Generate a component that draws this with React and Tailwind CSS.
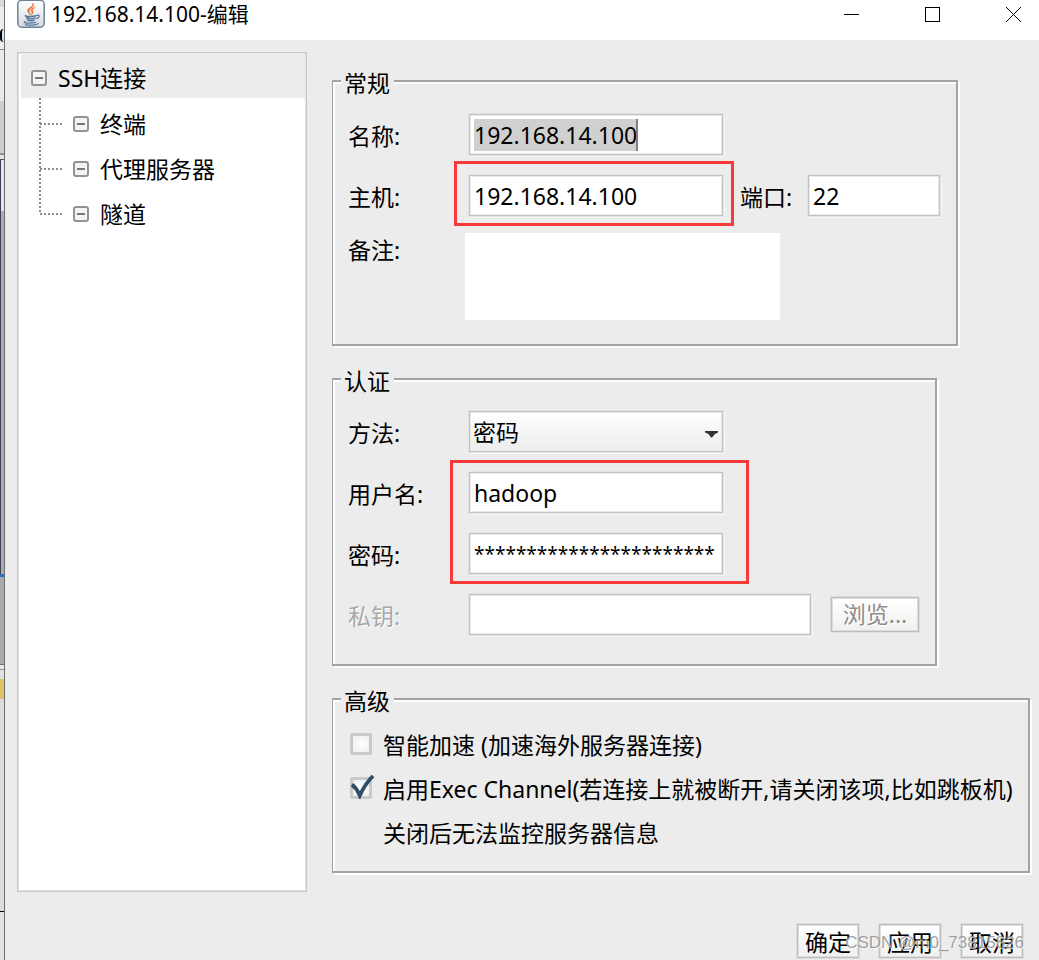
import { useEffect, useRef } from "react";

const fieldEdge =
  "border border-[#c3c3c3] outline-none shadow-[0_0_0_1px_#e4e4e4,inset_0_0_0_1px_#e9e9e9,2px_2px_0_#f6f6f6]";

const inputClass = "h-[41px] bg-white px-1 text-black " + fieldEdge;

const edgeBands = [
  "h-[7px] bg-[#dadada]",
  "h-[22px] bg-[#ededed]",
  "h-[13px] bg-[#cfe3f2] border-l-2 border-black rounded-l-full",
  "h-[7px] bg-[#ededed]",
  "h-px bg-[#8a8a8a]",
  "h-[51px] bg-[#e9e9e9]",
  "h-[52px] bg-[#cdd0d3]",
  "h-[2px] bg-[#8c8c8c]",
  "h-[4px] bg-[#e6e6e6]",
  "h-px bg-[#555555]",
  "h-[51px] bg-[#e6e4e4] border-l border-[#3a4254]",
  "h-[363px] bg-[#adadad] border-l border-[#3a4254]",
  "h-[3px] bg-[#2f6fc0]",
  "h-[87px] bg-[#a9a9ab]",
  "h-px bg-[#707070]",
  "h-[4px] bg-[#e8e8e8]",
  "h-px bg-[#909090]",
  "h-[9px] bg-[#dfe0e1]",
  "h-[20px] bg-[#dfc267]",
  "h-[212px] bg-[#dcdddf]",
  "h-px bg-black",
  "flex-1 bg-[#e2e2e2]",
];

function BackgroundEdge() {
  return (
    <div aria-hidden="true" className="flex w-[5px] shrink-0 flex-col border-r border-[#6c6c6c] bg-[#e2e2e2]">
      {edgeBands.map((c, i) => (
        <div key={i} className={c} />
      ))}
    </div>
  );
}

function JavaIcon() {
  return (
    <svg width="28" height="28" viewBox="0 0 28 28" aria-hidden="true" className="shrink-0">
      <defs>
        <linearGradient id="jbg" x1="0" y1="0" x2="0" y2="1">
          <stop offset="0" stopColor="#ffffff" />
          <stop offset="1" stopColor="#d5dade" />
        </linearGradient>
      </defs>
      <rect x="0.8" y="0.3" width="26.4" height="26.9" rx="4" fill="url(#jbg)" stroke="#6d8194" strokeWidth="1.5" />
      <path
        d="M15.800 3.200C17 7 10.400 7.600 10.600 10.800C10.700 12.600 12.600 13.300 13.400 15C13 12.800 11.900 12 12.300 10.500C13 8.300 17.900 7.300 15.800 3.200z"
        fill="#e8793a"
        stroke="#e8793a"
        strokeWidth="0.8"
      />
      <path
        d="M18.300 7.300C15.500 8 13.600 9.600 14.300 11.200C14.800 12.300 15.500 13.300 14.300 15C16.300 13.800 16.500 12.500 15.900 11.300C15.200 10 16 8.800 18.300 7.300z"
        fill="#e8793a"
        stroke="#e8793a"
        strokeWidth="0.5"
      />
      <g fill="none" stroke="#53789a" strokeLinecap="round">
        <path d="M8.500 15.500c-1.500 1.300 8 1.300 11 .1M9.500 17.800c2.500.9 6.500.9 8.700.1M10.300 20c2 .8 5 .8 7 0" strokeWidth="1.500" />
        <path d="M20 15.300c3-.8 3 2.300-.5 3.400" strokeWidth="1.200" />
        <path d="M8.300 21.500c-4.500 1.500 5 2.300 10.300.9M8.500 24.600c4.500.9 11 .6 12.800-1" strokeWidth="1.200" />
      </g>
    </svg>
  );
}

function WindowButton({ label, children }) {
  return (
    <button type="button" aria-label={label} className="flex h-[29px] w-[51px] items-center justify-center">
      <svg width="17" height="17" viewBox="0 0 17 17" fill="none" stroke="#000" strokeWidth="1" aria-hidden="true">
        {children}
      </svg>
    </button>
  );
}

function TitleBar() {
  return (
    <header className="flex h-10 items-start bg-white pl-3">
      <JavaIcon />
      <h1 className="ml-1.5 text-[21px] leading-[29px]">192.168.14.100-编辑</h1>
      <div className="ml-auto flex gap-[30px]">
        <WindowButton label="最小化">
          <path d="M1 8.5h15" />
        </WindowButton>
        <WindowButton label="最大化">
          <rect x="1.500" y="1.500" width="14" height="14" />
        </WindowButton>
        <WindowButton label="关闭">
          <path d="M1 1l15 15M16 1L1 16" />
        </WindowButton>
      </div>
    </header>
  );
}

function Toggle() {
  return (
    <span aria-hidden="true" className="flex size-4 shrink-0 items-center justify-center rounded-[3px] border-2 border-[#939393] bg-[#f4f4f4]">
      <span className="h-[2px] w-2 bg-[#777777]" />
    </span>
  );
}

function Tree() {
  return (
    <nav className="w-[290px] shrink-0 border border-[#c6c6c6] bg-white pl-[3px] shadow-[inset_0_0_0_1px_#e2e2e2]">
      <a href="#ssh" className="mr-px flex h-[45px] items-center gap-[11px] bg-[#ececec] pt-1 pl-[10px]">
        <Toggle />
        <span>SSH连接</span>
      </a>
      <div className="relative pt-[3px]">
        <span
          aria-hidden="true"
          className="absolute left-[18px] top-0 h-[115px] w-[2px] bg-[repeating-linear-gradient(to_bottom,#8c8c8c_0_2px,transparent_2px_4px)]"
        />
        <ul>
          {["终端", "代理服务器", "隧道"].map((t) => (
            <li key={t}>
              <a href={"#" + t} className="flex h-[45px] items-center pl-[19px]">
                <span
                  aria-hidden="true"
                  className="h-[2px] w-[22px] bg-[repeating-linear-gradient(to_right,#8c8c8c_0_2px,transparent_2px_4px)]"
                />
                <span className="mx-[11px]">
                  <Toggle />
                </span>
                <span>{t}</span>
              </a>
            </li>
          ))}
        </ul>
      </div>
    </nav>
  );
}

function Group({ title, className, children }) {
  return (
    <fieldset
      className={
        "min-w-0 border-2 border-l border-[#a3a3a3] pl-[15px] shadow-[2px_2px_0_#fff,inset_2px_2px_0_#fff] " + className
      }
    >
      <legend className="-ml-[7px] bg-[#ececec] pt-1.5 pr-1 pb-px pl-[3px] leading-6">{title}</legend>
      {children}
    </fieldset>
  );
}

function Label({ htmlFor, children, className = "" }) {
  return (
    <label htmlFor={htmlFor} className={"w-[121px] shrink-0 pt-0.5 leading-7 " + className}>
      {children}
    </label>
  );
}

function Check({ id, defaultChecked, children }) {
  return (
    <div className="flex h-11 items-center pl-0.5">
      <span className="relative mr-[11px] flex size-[22px] shrink-0">
        <input
          id={id}
          type="checkbox"
          defaultChecked={defaultChecked}
          className="peer size-[22px] appearance-none rounded-[2px] border-[3px] border-[#cacaca] bg-[radial-gradient(#ffffff,#ededed)]"
        />
        <svg
          viewBox="0 0 26 24"
          aria-hidden="true"
          className="pointer-events-none absolute -top-0.5 left-0 hidden h-6 w-[26px] peer-checked:block"
        >
          <path d="M2 9.500C5 12 8 16 9.800 20.500C13 13.500 17 7 23 1" fill="none" stroke="#2f4d66" strokeWidth="3.800" />
        </svg>
      </span>
      <label htmlFor={id} className="whitespace-nowrap pt-0.5">
        {children}
      </label>
    </div>
  );
}

const buttonClass =
  "border border-[#bdbdbd] bg-linear-to-b from-white to-[#f0f0f0] leading-none whitespace-nowrap shadow-[0_0_0_1px_#dedede,inset_0_0_0_1px_#dedede]";

export default function App() {
  const nameRef = useRef(null);
  useEffect(() => {
    nameRef.current.focus();
    nameRef.current.select();
  }, []);

  return (
    <div className="flex min-h-screen bg-[#ececec] font-['Noto_Sans','Noto_Sans_CJK_SC',sans-serif] text-[23px] leading-[30px] font-normal text-black">
      <BackgroundEdge />
      <div className="flex min-w-0 flex-1 flex-col">
        <TitleBar />
        <form className="flex flex-1 flex-col" onSubmit={(e) => e.preventDefault()}>
          <div className="flex flex-1 gap-[25px] pt-3 pl-3 pr-[9px]">
            <Tree />
            <div className="flex min-w-0 flex-1 flex-col gap-[17px] pt-[13px]">
              <Group title="常规" className="w-fit pr-4 pb-6">
                <div className="flex flex-col gap-5 pt-[18px]">
                  <div className="flex items-center">
                    <Label htmlFor="name">名称:</Label>
                    <div className="relative flex">
                      <input
                        id="name"
                        ref={nameRef}
                        defaultValue="192.168.14.100"
                        className={inputClass + " w-[254px] selection:bg-[#d0d0d0] selection:text-black"}
                      />
                      <span aria-hidden="true" className="absolute top-[5px] left-[167px] h-8 w-[2px] bg-[#808080]" />
                    </div>
                  </div>
                  <div className="flex items-center">
                    <Label htmlFor="host">主机:</Label>
                    <div className="relative flex">
                      <input id="host" defaultValue="192.168.14.100" className={inputClass + " w-[254px]"} />
                      <span
                        aria-hidden="true"
                        className="pointer-events-none absolute -top-[14px] -right-[11px] -bottom-[10px] -left-[15px] border-[3px] border-[#f93a3a]"
                      />
                    </div>
                    <label htmlFor="port" className="ml-[17px] w-[68px] pt-0.5 leading-7">
                      端口:
                    </label>
                    <input id="port" defaultValue="22" className={inputClass + " w-[132px]"} />
                  </div>
                </div>
                <div className="flex items-start pt-[17px]">
                  <label htmlFor="note" className="w-[117px] shrink-0 pt-[3px] leading-7">
                    备注:
                  </label>
                  <textarea id="note" className="block h-[87px] w-[315px] resize-none bg-white p-1 outline-none" />
                </div>
              </Group>

              <Group title="认证" className="w-fit pr-4 pb-[29px]">
                <div className="flex flex-col gap-5 pt-[17px]">
                  <div className="flex items-center">
                    <Label htmlFor="method">方法:</Label>
                    <div className="relative flex">
                      <select
                        id="method"
                        className={"h-[41px] w-[254px] appearance-none bg-linear-to-b from-white to-[#ededed] px-[3px] " + fieldEdge}
                      >
                        <option>密码</option>
                      </select>
                      <svg
                        width="13"
                        height="7"
                        viewBox="0 0 13 7"
                        aria-hidden="true"
                        className="pointer-events-none absolute top-5 right-[5px]"
                      >
                        <path d="M0 0h13v1.500L10 3L7 6.500H6L3.500 3L0 1.500z" fill="#333333" />
                      </svg>
                    </div>
                  </div>
                  <div className="relative flex flex-col gap-5">
                    <div className="flex items-center">
                      <Label htmlFor="user">用户名:</Label>
                      <input id="user" defaultValue="hadoop" className={inputClass + " w-[254px]"} />
                    </div>
                    <div className="flex items-center">
                      <Label htmlFor="pass">密码:</Label>
                      <div className="flex text-[19px]">
                        <input
                          id="pass"
                          autoComplete="off"
                          defaultValue="***********************"
                          className={inputClass + " w-[254px]"}
                        />
                      </div>
                    </div>
                    <span
                      aria-hidden="true"
                      className="pointer-events-none absolute -top-3 -bottom-[10px] left-[102px] w-[299px] border-[3px] border-[#f93a3a]"
                    />
                  </div>
                  <div className="flex items-center">
                    <Label htmlFor="key" className="text-[#a8a8a8] text-shadow-[1px_1px_0_#ffffff]">
                      私钥:
                    </Label>
                    <input id="key" disabled className={inputClass + " w-[342px]"} />
                    <button
                      type="button"
                      disabled
                      className={buttonClass + " ml-5 h-[35px] w-[88px] text-[#8c8c8c] text-shadow-[1px_1px_0_#ffffff]"}
                    >
                      浏览...
                    </button>
                  </div>
                </div>
              </Group>

              <Group title="高级" className="pb-[17px]">
                <div className="pt-2">
                  <Check id="accel">智能加速 (加速海外服务器连接)</Check>
                  <Check id="exec" defaultChecked>
                    启用Exec Channel(若连接上就被断开,请关闭该项,比如跳板机)
                  </Check>
                  <p className="flex h-11 items-center pt-0.5 pl-[35px]">关闭后无法监控服务器信息</p>
                </div>
              </Group>
            </div>
          </div>
          <footer className="relative flex justify-end gap-5 pt-8 pr-4 pb-0.5">
            {["确定", "应用", "取消"].map((t) => (
              <button key={t} type="button" className={buttonClass + " h-[34px] w-[62px] pt-0.5"}>
                {t}
              </button>
            ))}
            <span className="pointer-events-none absolute right-[15px] bottom-[5px] font-['Liberation_Sans',Arial,sans-serif] text-[17px] leading-6 text-[#8a8a8a]/80 text-shadow-[1px_1px_0_#ffffffaa]">
              CSDN @m0_73815826
            </span>
          </footer>
        </form>
      </div>
    </div>
  );
}
